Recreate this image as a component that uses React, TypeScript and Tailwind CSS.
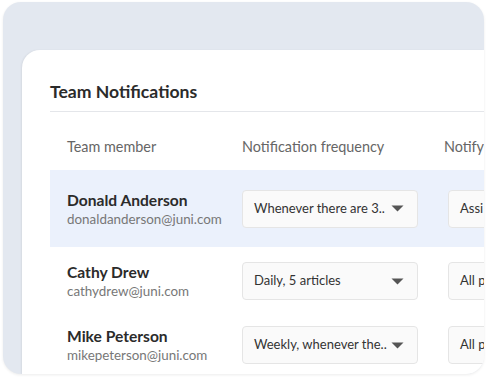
const rows = [
  { name: 'Donald Anderson', email: 'donaldanderson@juni.com', freq: 'Whenever there are 3..', notify: 'Assi', active: true, h: 'h-[77px]' },
  { name: 'Cathy Drew', email: 'cathydrew@juni.com', freq: 'Daily, 5 articles', notify: 'All p', active: false, h: 'h-[68px]' },
  { name: 'Mike Peterson', email: 'mikepeterson@juni.com', freq: 'Weekly, whenever the..', notify: 'All p', active: false, h: 'h-[60px]' },
];

function Caret() {
  return (
    <svg width="13" height="7" viewBox="0 0 13 7" className="shrink-0">
      <path d="M0.5 0.5h12L6.5 6.5z" fill="#555" />
    </svg>
  );
}

export default function App() {
  return (
    <div className="w-[488px] h-[380px] bg-white pt-[2px] pl-[3px]" style={{ fontFamily: 'Lato, "Open Sans", sans-serif' }}>
      <div className="w-[481px] h-[372px] rounded-[18px] bg-[#e3e8f0] overflow-hidden pl-[19px] pt-[48px] shadow-[0_1px_3px_rgba(0,0,0,0.08)]">
        <div className="bg-white rounded-tl-[18px] h-full pl-[28px] pt-[30px] shadow-[-1px_0_2px_rgba(0,0,0,0.06)]">
          <h2 className="text-[17.6px] leading-6 font-bold text-[#2b2b2b] pb-[7px] border-b border-[#e4e6ea]">Team Notifications</h2>

          <div className="flex items-end h-[58px] pb-[14px] text-[14.4px] leading-[18px] text-[#666] whitespace-nowrap">
            <span className="w-[194px] pl-[17px]">Team member</span>
            <span className="w-[204px]">Notification frequency</span>
            <span>Notify</span>
          </div>

          {rows.map(r => (
            <div key={r.email} className={`flex items-center ${r.h} ${r.active ? 'bg-[#ebf1fc]' : ''} whitespace-nowrap`}>
              <div className="w-[192px] pl-[17px]">
                <div className="text-[15.6px] leading-5 font-bold text-[#2b2b2b]">{r.name}</div>
                <div className="text-[13.4px] leading-[18px] text-[#777]">{r.email}</div>
              </div>
              <div className="w-[206px]">
                <div className="w-[176px] h-[38px] flex items-center justify-between pl-[11px] pr-[13px] bg-[#fafafa] border border-[#e5e5e5] rounded text-[13px] text-[#333]">
                  <span>{r.freq}</span>
                  <Caret />
                </div>
              </div>
              <div className="flex-1 overflow-hidden">
                <div className="w-[176px] h-[38px] flex items-center pl-[11px] bg-[#fafafa] border border-[#e5e5e5] rounded text-[13px] text-[#333]">
                  {r.notify}
                </div>
              </div>
            </div>
          ))}
        </div>
      </div>
    </div>
  );
}
